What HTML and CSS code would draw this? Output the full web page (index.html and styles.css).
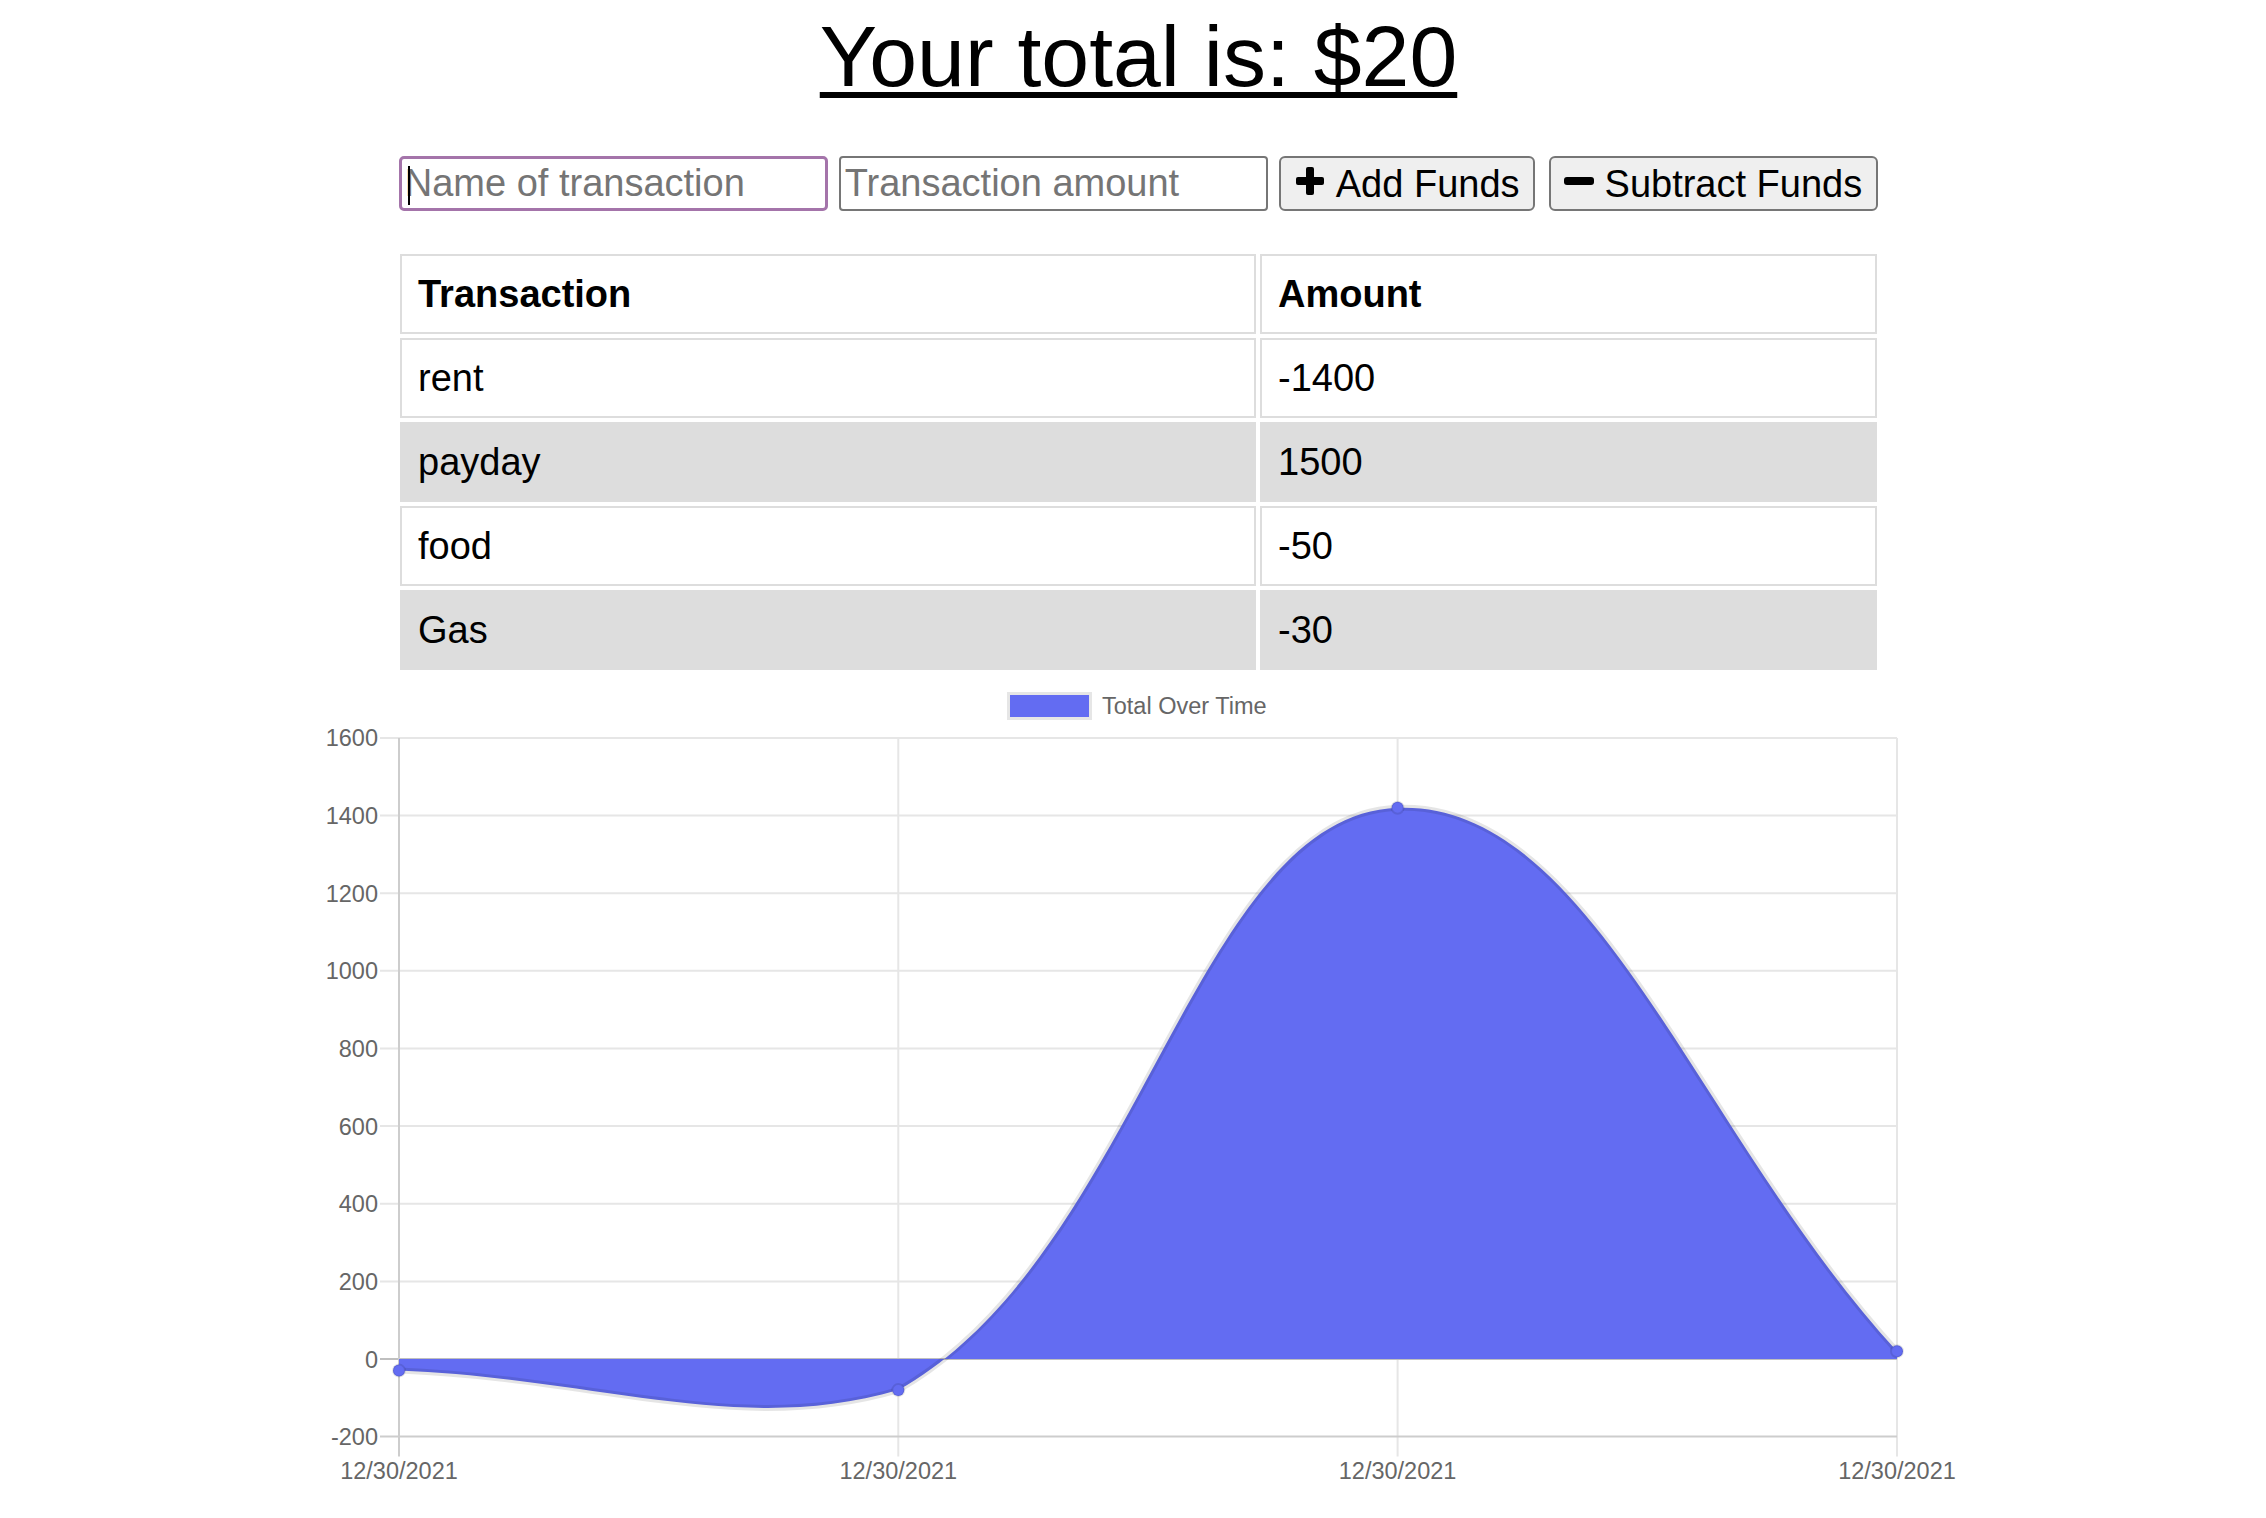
FILE: index.html
```html
<!DOCTYPE html>
<html lang="en">
<head>
<meta charset="utf-8">
<title>Budget Tracker</title>
<link rel="stylesheet" href="styles.css">
</head>
<body>
<h1 class="total">Your total is: $20</h1>
<div class="wrap">
  <form class="form">
    <span class="field"><input class="input input-focus" type="text" placeholder="Name of transaction"><span class="caret"></span></span>
    <input class="input input-amount" type="text" placeholder="Transaction amount">
    <button class="btn btn-add" type="button"><svg class="icon icon-plus" viewBox="0 0 28 28"><rect x="10" y="0" width="8" height="28" rx="2"/><rect x="0" y="10" width="28" height="8" rx="2"/></svg>Add Funds</button>
    <button class="btn btn-sub" type="button"><svg class="icon icon-minus" viewBox="0 0 30 8"><rect x="0" y="0" width="30" height="8" rx="3"/></svg>Subtract Funds</button>
  </form>
  <table class="tx">
    <thead>
      <tr><th class="name">Transaction</th><th>Amount</th></tr>
    </thead>
    <tbody>
      <tr><td>rent</td><td>-1400</td></tr>
      <tr><td>payday</td><td>1500</td></tr>
      <tr><td>food</td><td>-50</td></tr>
      <tr><td>Gas</td><td>-30</td></tr>
    </tbody>
  </table>
</div>
<svg class="chart" viewBox="11 674 2255 844" width="2255" height="844" xmlns="http://www.w3.org/2000/svg">
  <g class="legend">
    <rect class="legend-box" x="1008.5" y="693.5" width="82" height="25"/>
    <text x="1102" y="714">Total Over Time</text>
  </g>
  <g class="grid">
    <line x1="380" x2="1897" y1="737.9" y2="737.9"/>
    <line x1="380" x2="1897" y1="815.5" y2="815.5"/>
    <line x1="380" x2="1897" y1="893.2" y2="893.2"/>
    <line x1="380" x2="1897" y1="970.8" y2="970.8"/>
    <line x1="380" x2="1897" y1="1048.4" y2="1048.4"/>
    <line x1="380" x2="1897" y1="1126.1" y2="1126.1"/>
    <line x1="380" x2="1897" y1="1203.7" y2="1203.7"/>
    <line x1="380" x2="1897" y1="1281.4" y2="1281.4"/>
    <line x1="898.3" x2="898.3" y1="737.9" y2="1456.6"/>
    <line x1="1397.6" x2="1397.6" y1="737.9" y2="1456.6"/>
    <line x1="1897" x2="1897" y1="737.9" y2="1456.6"/>
  </g>
  <line class="zero" x1="380" x2="1897" y1="1359" y2="1359"/>
  <line class="axis" x1="380" x2="1897" y1="1436.6" y2="1436.6"/>
  <line class="axis" x1="399" x2="399" y1="737.9" y2="1456.6"/>
  <g class="ylabels">
    <text x="378" y="746.4">1600</text>
    <text x="378" y="824">1400</text>
    <text x="378" y="901.7">1200</text>
    <text x="378" y="979.3">1000</text>
    <text x="378" y="1056.9">800</text>
    <text x="378" y="1134.6">600</text>
    <text x="378" y="1212.2">400</text>
    <text x="378" y="1289.9">200</text>
    <text x="378" y="1367.5">0</text>
    <text x="378" y="1445.1">-200</text>
  </g>
  <g class="xlabels">
    <text x="399" y="1478.5">12/30/2021</text>
    <text x="898.3" y="1478.5">12/30/2021</text>
    <text x="1397.6" y="1478.5">12/30/2021</text>
    <text x="1897" y="1478.5">12/30/2021</text>
  </g>
  <path class="area" d="M399 1370.6 C598.7 1378.4 740.7 1436.6 898.3 1390.1 C1140.2 1253.8 1194 815.7 1397.6 807.8 C1593.5 800.2 1697.2 1133.8 1897 1351.2 L1897 1359 L399 1359 Z"/>
  <path class="line" d="M399 1370.6 C598.7 1378.4 740.7 1436.6 898.3 1390.1 C1140.2 1253.8 1194 815.7 1397.6 807.8 C1593.5 800.2 1697.2 1133.8 1897 1351.2"/>
  <g class="points">
    <circle cx="399" cy="1370.6" r="6"/>
    <circle cx="898.3" cy="1390.1" r="6"/>
    <circle cx="1397.6" cy="807.8" r="6"/>
    <circle cx="1897" cy="1351.2" r="6"/>
  </g>
</svg>
</body>
</html>
```

FILE: styles.css
```css
html {
  background: #fff;
}

body {
  margin: 0;
  padding: 0 0 0 11px;
  font-family: "Liberation Sans", Arial, Helvetica, sans-serif;
  color: #000;
  background: #fff;
  overflow: hidden;
}

.total {
  margin: 7px 0 50px;
  font-size: 86px;
  line-height: 99px;
  font-weight: 400;
  text-align: center;
  text-decoration: underline;
  text-decoration-thickness: 6px;
  text-underline-offset: 6px;
}

.wrap {
  width: 1485px;
  margin: 0 auto;
}

.form {
  display: flex;
  justify-content: center;
  height: 55px;
  margin: 0;
}

.field {
  position: relative;
  display: block;
  margin-right: 11px;
}

.input {
  box-sizing: border-box;
  display: block;
  width: 429px;
  height: 55px;
  margin: 0;
  padding: 0 4px;
  border: 2px solid #767676;
  border-radius: 4px;
  font: 38px/44px "Liberation Sans", Arial, sans-serif;
  color: #000;
  background: #fff;
  outline: none;
}

.input::placeholder {
  color: #757575;
  opacity: 1;
}

.input-focus {
  border: 3px solid #a474aa;
  padding-left: 3px;
  border-radius: 5px;
}

.input-amount {
  margin-right: 11px;
}

.caret {
  position: absolute;
  left: 9px;
  top: 10px;
  width: 2px;
  height: 39px;
  background: #000;
}

.btn {
  display: flex;
  align-items: center;
  box-sizing: border-box;
  height: 55px;
  margin: 0;
  padding: 0 13px;
  border: 2px solid #767676;
  border-radius: 6px;
  background: #efefef;
  font: 38px/44px "Liberation Sans", Arial, sans-serif;
  color: #000;
  white-space: nowrap;
}

.btn-add {
  margin-right: 14px;
}

.btn-sub {
  padding-right: 14px;
}

.icon {
  display: block;
  flex: none;
  margin-bottom: 5px;
  fill: #000;
}

.icon-plus {
  width: 28px;
  height: 28px;
  margin-left: 2px;
  margin-right: 12px;
}

.icon-minus {
  width: 30px;
  height: 8px;
  margin-right: 11px;
}

.tx {
  margin-top: 39px;
  width: 1485px;
  border-collapse: separate;
  border-spacing: 4px;
  table-layout: fixed;
  font-size: 38px;
  line-height: 44px;
}

.tx th,
.tx td {
  padding: 16px;
  border: 2px solid #ddd;
  text-align: left;
}

.tx th {
  font-weight: 700;
}

.tx th.name {
  box-sizing: border-box;
  width: 856px;
}

.tx tbody tr:nth-child(even) td {
  background: #ddd;
}

.chart {
  display: block;
  width: 2255px;
  height: 844px;
}

.chart text {
  font-family: "Liberation Sans", Arial, Helvetica, sans-serif;
  font-size: 23.5px;
  fill: #666;
}

.legend-box {
  fill: #636cf2;
  stroke: #e6e6e6;
  stroke-width: 3;
}

.grid line {
  stroke: #e6e6e6;
  stroke-width: 2;
}

.zero {
  stroke: #bfbfbf;
  stroke-width: 2;
}

.axis {
  stroke: #cdcdcd;
  stroke-width: 2;
}

.ylabels text {
  text-anchor: end;
}

.xlabels text {
  text-anchor: middle;
}

.area {
  fill: #636cf2;
}

.line {
  fill: none;
  stroke: rgba(0, 0, 0, 0.1);
  stroke-width: 6;
}

.points circle {
  fill: #636cf2;
  stroke: rgba(0, 0, 0, 0.1);
  stroke-width: 2;
}
```
